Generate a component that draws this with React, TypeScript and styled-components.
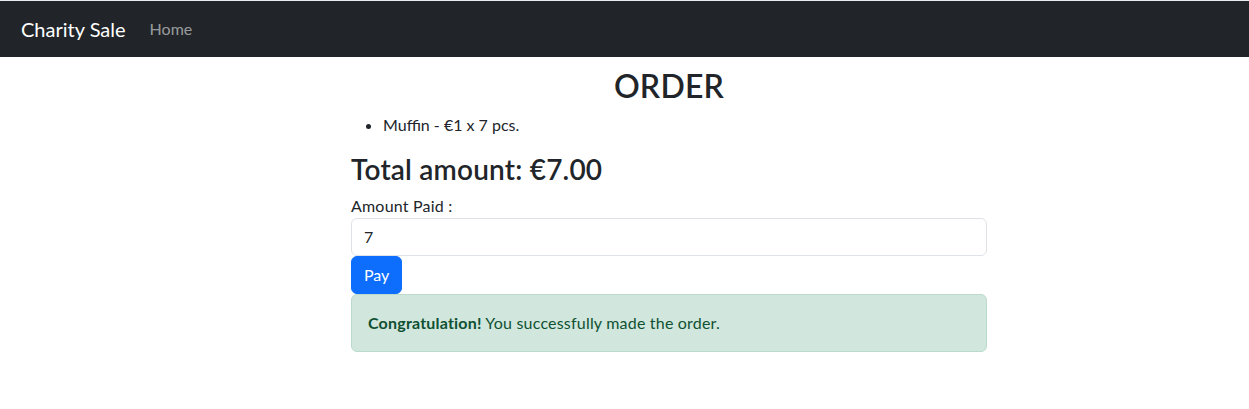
import styled, { createGlobalStyle } from "styled-components";

const GlobalStyle = createGlobalStyle`
    *, *::before, *::after {
        box-sizing: border-box;
    }
    body {
        margin: 0;
        font-family: "Lato", "Noto Sans", sans-serif;
        font-size: 16px;
        line-height: 1.5;
        letter-spacing: 0.2px;
        color: #212529;
        background: #fff;
    }
`

const Navbar = styled.nav`
    display: flex;
    align-items: center;
    height: 57px;
    padding: 8px 21px;
    background: #212529;
    border-top: 1px solid #e9ecef;
`

const Brand = styled.a`
    font-size: 20px;
    line-height: 30px;
    letter-spacing: 0;
    color: #fff;
    margin-right: 16px;
    text-decoration: none;
`

const NavLink = styled.a`
    padding: 8px;
    letter-spacing: 0;
    color: rgba(255, 255, 255, 0.55);
    text-decoration: none;
`

const Container = styled.main`
    width: 636px;
    margin-left: 351px;
`

const Title = styled.h1`
    margin: 10px 0 8px;
    font-size: 32px;
    font-weight: 600;
    line-height: 1.2;
    text-align: center;
`

const ItemList = styled.ul`
    margin: 0 0 16px;
    padding-left: 32px;
    letter-spacing: 0;
`

const Total = styled.h3`
    margin: 0 0 7px;
    font-size: 28px;
    font-weight: 600;
    line-height: 1.2;
`

const Label = styled.label`
    display: block;
`

const Input = styled.input`
    display: block;
    width: 100%;
    height: 38px;
    padding: 6px 12px;
    font: inherit;
    color: #212529;
    border: 1px solid #dee2e6;
    border-radius: 6px;
    outline: none;
`

const Button = styled.button`
    display: block;
    height: 38px;
    padding: 6px 12px;
    font: inherit;
    color: #fff;
    background: #0d6efd;
    border: 1px solid #0d6efd;
    border-radius: 6px;
`

const Alert = styled.div`
    padding: 16px;
    color: #0f5132;
    background: #d1e7dd;
    border: 1px solid #badbcc;
    border-radius: 6px;
`

export default function App() {
    return (
        <>
            <GlobalStyle />
            <Navbar>
                <Brand href="#">Charity Sale</Brand>
                <NavLink href="#">Home</NavLink>
            </Navbar>
            <Container>
                <Title>ORDER</Title>
                <ItemList>
                    <li>Muffin - €1 x 7 pcs.</li>
                </ItemList>
                <Total>Total amount: €7.00</Total>
                <Label htmlFor="paid">Amount Paid :</Label>
                <Input id="paid" type="text" defaultValue="7" />
                <Button>Pay</Button>
                <Alert>
                    <strong>Congratulation!</strong> You successfully made the order.
                </Alert>
            </Container>
        </>
    );
}
